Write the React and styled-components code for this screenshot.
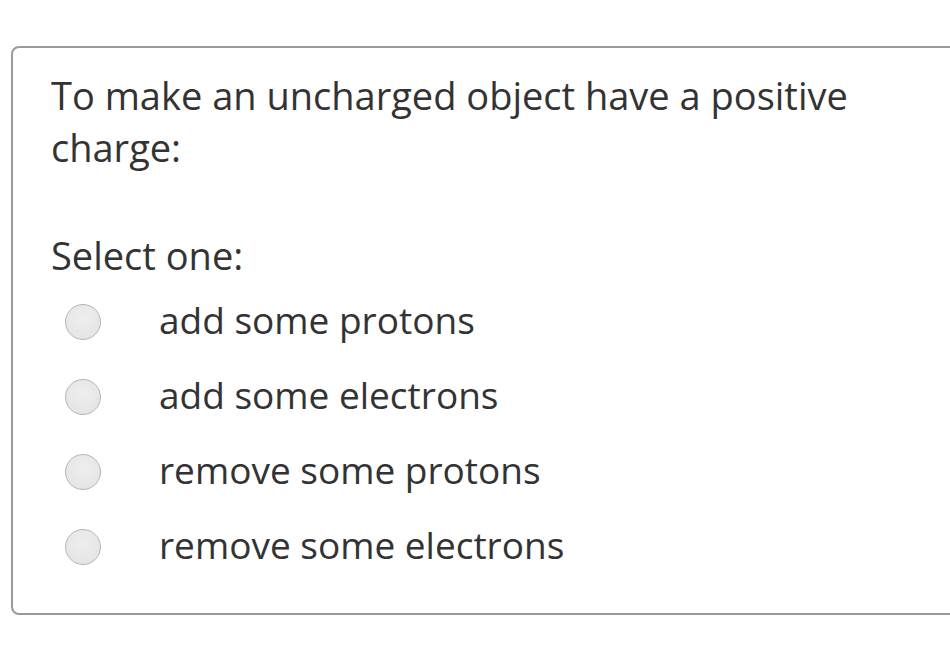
import React from "react";
import styled, { createGlobalStyle } from "styled-components";

const Global = createGlobalStyle`
  html, body { margin: 0; padding: 0; background: #fff; }
  body { font-family: "Open Sans", "Noto Sans", sans-serif; color: #333; overflow: hidden; }
`;

const Page = styled.div`
  width: 950px;
  height: 672px;
  padding: 46px 0 0 11px;
  box-sizing: border-box;
  overflow: hidden;
`;

const Card = styled.div`
  width: 980px;
  height: 569px;
  box-sizing: border-box;
  border: 2px solid #9a9a9a;
  border-radius: 8px;
  padding: 21px 0 0 38px;
`;

const Question = styled.p`
  margin: 0;
  font-size: 38px;
  line-height: 52px;
  width: 820px;
`;

const Prompt = styled.div`
  margin-top: 56px;
  font-size: 38px;
  line-height: 52px;
`;

const Options = styled.div`
  display: flex;
  flex-direction: column;
  gap: 23px;
  margin-top: 12px;
`;

const Option = styled.label`
  display: flex;
  align-items: center;
  height: 52px;
  font-size: 37px;
`;

const Radio = styled.span`
  width: 34px;
  height: 34px;
  border-radius: 50%;
  border: 1.5px solid #b5b5b5;
  background: radial-gradient(circle at 50% 40%, #eeeeee 0%, #e2e2e2 100%);
  margin: 6px 58px 0 14px;
  flex: none;
`;

const opts = [
  "add some protons",
  "add some electrons",
  "remove some protons",
  "remove some electrons",
];

export default function App() {
  return (
    <>
      <Global />
      <Page>
        <Card>
          <Question>To make an uncharged object have a positive charge:</Question>
          <Prompt>Select one:</Prompt>
          <Options>
            {opts.map((o) => (
              <Option key={o}>
                <Radio />
                {o}
              </Option>
            ))}
          </Options>
        </Card>
      </Page>
    </>
  );
}
